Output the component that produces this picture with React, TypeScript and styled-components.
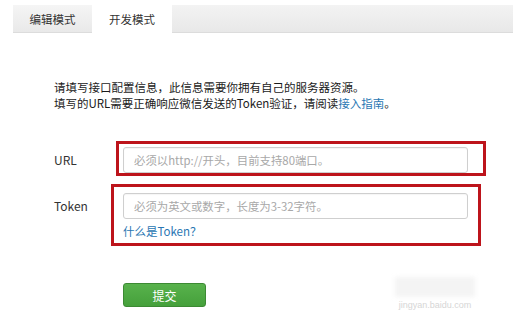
import styled, { createGlobalStyle } from 'styled-components';

const GlobalStyle = createGlobalStyle`
  html, body {
    margin: 0;
    padding: 0;
    background: #fff;
  }
  body {
    font-family: "Noto Sans CJK SC", "Liberation Sans", sans-serif;
    color: #222;
  }
`;

const App = () => {
  return (
    <StyledPage>
      <GlobalStyle />
      <StyledTabBar>
        <StyledTab>编辑模式</StyledTab>
        <StyledTab $active>开发模式</StyledTab>
        <StyledTabFiller />
      </StyledTabBar>

      <StyledContent>
        <StyledIntro>
          <p>请填写接口配置信息，此信息需要你拥有自己的服务器资源。</p>
          <p>
            填写的URL需要正确响应微信发送的Token验证，请阅读
            <StyledLink href="#">接入指南</StyledLink>。
          </p>
        </StyledIntro>

        <StyledField $mark={116} $gap={30}>
          <StyledLabel $offset={6}>URL</StyledLabel>
          <StyledMarkBox $padLeft={4} $padTop={3}>
            <StyledInput placeholder="必须以http://开头，目前支持80端口。" />
          </StyledMarkBox>
        </StyledField>

        <StyledField $mark={111} $gap={8}>
          <StyledLabel $offset={9}>Token</StyledLabel>
          <StyledMarkBox $padLeft={9} $padTop={6}>
            <StyledInput placeholder="必须为英文或数字，长度为3-32字符。" />
            <StyledHelp href="#">什么是Token？</StyledHelp>
          </StyledMarkBox>
        </StyledField>

        <StyledFooter>
          <StyledSubmit>提交</StyledSubmit>
          <StyledWatermark>
            <StyledWatermarkLogo />
            <span>jingyan.baidu.com</span>
          </StyledWatermark>
        </StyledFooter>
      </StyledContent>
    </StyledPage>
  );
};

export default App;

const StyledPage = styled.div`
  width: 519px;
  height: 321px;
  overflow: hidden;
`;

const StyledTabBar = styled.div`
  display: flex;
  margin: 5px 6px 0 13px;
  height: 28px;
`;

const StyledTab = styled.div<{ $active?: boolean }>`
  width: ${(p) => (p.$active ? '78px' : '79px')};
  margin-right: 1px;
  display: flex;
  align-items: center;
  justify-content: center;
  font-size: 11.5px;
  color: #333;
  background: ${(p) =>
    p.$active ? '#fff' : 'linear-gradient(#f5f5f5, #e9e9e9)'};
  border-bottom: 1px solid ${(p) => (p.$active ? '#fff' : '#dcdcdc')};
  box-sizing: border-box;
`;

const StyledTabFiller = styled.div`
  flex: 1;
  background: linear-gradient(#f3f3f3, #e8e8e8);
  border-bottom: 1px solid #dcdcdc;
`;

const StyledContent = styled.div`
  padding: 46px 0 0 54px;
`;

const StyledIntro = styled.div`
  font-size: 11.5px;
  line-height: 16px;
  color: #1a1a1a;

  p {
    margin: 0;
    white-space: nowrap;
  }
`;

const StyledLink = styled.a`
  color: #2a77b3;
  text-decoration: none;
`;

const StyledField = styled.div<{ $mark: number; $gap: number }>`
  display: grid;
  grid-template-columns: ${(p) => p.$mark - 54}px auto;
  align-items: start;
  margin-top: ${(p) => p.$gap}px;
  width: 422px;
`;

const StyledLabel = styled.div<{ $offset: number }>`
  font-size: 12px;
  line-height: 26px;
  padding-top: ${(p) => p.$offset}px;
  color: #333;
`;

const StyledMarkBox = styled.div<{ $padLeft: number; $padTop: number }>`
  border: 3px solid #bd141b;
  padding: ${(p) => p.$padTop}px 5px ${(p) => (p.$padTop > 3 ? 4 : 0)}px
    ${(p) => p.$padLeft}px;
  display: flex;
  flex-direction: column;
  gap: 4px;
  width: ${(p) => 359 - p.$padLeft}px;
`;

const StyledInput = styled.input`
  width: 345px;
  height: 26px;
  box-sizing: border-box;
  border: 1px solid #cfcfcf;
  border-radius: 3px;
  padding: 0 10px;
  font-family: "Noto Sans CJK SC", "Liberation Sans", sans-serif;
  font-size: 11.4px;
  outline: none;
  box-shadow: inset 0 1px 1px rgba(0, 0, 0, 0.04);

  &::placeholder {
    color: #a8a8a8;
  }
`;

const StyledHelp = styled.a`
  font-size: 11.5px;
  line-height: 16px;
  color: #2a77b3;
  text-decoration: none;
`;

const StyledFooter = styled.div`
  display: flex;
  align-items: flex-start;
  justify-content: space-between;
  margin-top: 37px;
  padding-left: 69px;
  width: 421px;
  box-sizing: border-box;
`;

const StyledSubmit = styled.button`
  width: 83px;
  height: 24px;
  border: 1px solid #3c8a33;
  border-radius: 3px;
  background: linear-gradient(#58b24c, #45a03b);
  color: #fff;
  font-family: "Noto Sans CJK SC", sans-serif;
  font-size: 12px;
  cursor: pointer;
`;

const StyledWatermark = styled.div`
  display: flex;
  flex-direction: column;
  align-items: center;
  gap: 3px;
  margin-top: -6px;
  font-family: "Liberation Sans", sans-serif;
  font-size: 9px;
  line-height: 10px;
  color: #d6d6d6;
`;

const StyledWatermarkLogo = styled.div`
  width: 80px;
  height: 20px;
  background: #f4f4f4;
  filter: blur(2px);
`;
